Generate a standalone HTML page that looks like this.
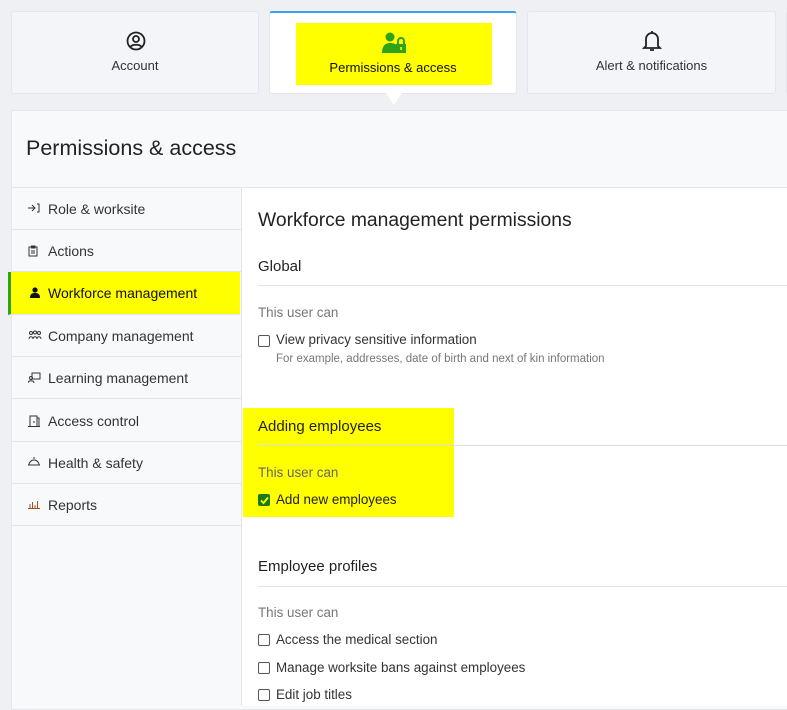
<!DOCTYPE html>
<html><head><meta charset="utf-8"><style>
*{margin:0;padding:0;box-sizing:border-box}
body{width:787px;height:706px;overflow:hidden;background:#eef0f4;font-family:"Liberation Sans",sans-serif;color:#222;position:relative}
.a{position:absolute}
.tab{position:absolute;top:11px;height:83px;background:#f4f5f9;border:1px solid #e4e6ec;border-radius:3px;text-align:center;font-size:13px;color:#333}
.tab .lbl{position:absolute;left:0;right:0;top:46px}
.side{position:absolute;left:11px;width:230px;height:42px;border-bottom:1px solid #e3e5ea;font-size:14px;color:#333}
.side span.t{position:absolute;left:37px;top:13px}
.side svg{position:absolute;left:17px;top:15px}
.h{position:absolute;left:258px;font-size:15px;color:#222}
.ln{position:absolute;left:258px;right:0;height:1px;background:#e3e5ea;z-index:2}
.muted{position:absolute;left:258px;font-size:13.4px;color:#777}
.cb{position:absolute;left:258px;width:12px;height:12px;border:1px solid #555;border-radius:2px;background:#fff}
.ct{position:absolute;left:276px;font-size:13.4px;color:#333}
</style></head><body>
<div class="tab" style="left:11px;width:248px">
<svg class="a" style="left:114px;top:19px" width="20" height="20" viewBox="0 0 20 20" fill="none" stroke="#222" stroke-width="1.8"><circle cx="10" cy="10" r="8.5"/><circle cx="10" cy="8" r="3"/><path d="M4.5 16c1.5-3 9.5-3 11 0"/></svg>
<div class="lbl">Account</div></div>
<div class="tab" style="left:269px;width:248px;background:#fff;border-top:2px solid #3aa0f0">
<div class="a" style="left:26px;top:10px;width:196px;height:62px;background:#ffff00"></div>
<svg class="a" style="left:112px;top:19px" width="26" height="22" viewBox="0 0 26 22"><circle cx="8" cy="5" r="4.5" fill="#2ea318"/><path d="M0 21c0-8 4-10 8-10s6 1 7 3v7z" fill="#2ea318"/><rect x="14" y="12" width="10" height="9" fill="#2ea318"/><path d="M16 12V9a3 3 0 0 1 6 0v3" fill="none" stroke="#2ea318" stroke-width="2"/><rect x="18.3" y="15" width="1.6" height="3" fill="#ffff00"/></svg>
<div class="lbl" style="top:47px;color:#111">Permissions &amp; access</div></div>
<div class="tab" style="left:527px;width:249px">
<svg class="a" style="left:114px;top:18px" width="20" height="22" viewBox="0 0 20 22" fill="none" stroke="#222" stroke-width="1.8"><path d="M4 16V9a6 6 0 0 1 12 0v7l2 2H2z"/><path d="M10 1v2M8 20h4"/></svg>
<div class="lbl">Alert &amp; notifications</div></div>
<div class="tab" style="left:786px;width:30px"></div>
<div class="a" style="left:11px;top:110px;width:780px;height:600px;background:#f8f9fb;border:1px solid #e4e6ec"></div>
<div class="a" style="left:386px;top:93px;width:0;height:0;border-left:8px solid transparent;border-right:8px solid transparent;border-top:12px solid #fff"></div>
<div class="a" style="left:26px;top:136px;font-size:21.5px;color:#222">Permissions &amp; access</div>
<div class="a" style="left:11px;top:187px;width:776px;height:1px;background:#e3e5ea"></div>
<div class="a" style="left:241px;top:188px;width:546px;height:518px;background:#fff;border-left:1px solid #e3e5ea"></div>

<div class="side" style="top:188px"><svg width="12" height="10" viewBox="0 0 12 10" fill="none" stroke="#333"><path d="M0 5h7M4 2l3 3-3 3M9 1h2v8H9"/></svg><span class="t">Role &amp; worksite</span></div>
<div class="side" style="top:230px"><svg width="10" height="12" viewBox="0 0 10 12" fill="none" stroke="#333"><rect x="1" y="2" width="8" height="9"/><path d="M3 1h4v2H3M3 6h4M3 8h4"/></svg><span class="t">Actions</span></div>
<div class="side" style="top:272px;left:8px;width:232px;background:#ffff00;border-left:3px solid #2ea318;height:43px"><svg width="10" height="11" viewBox="0 0 10 11" style="left:19px"><circle cx="5" cy="3" r="2.6" fill="#111"/><path d="M0 11c0-4 2-5 5-5s5 1 5 5z" fill="#111"/></svg><span class="t" style="left:37px;color:#111">Workforce management</span></div>
<div class="side" style="top:315px"><svg width="14" height="10" viewBox="0 0 14 10" fill="none" stroke="#333"><circle cx="3" cy="3" r="1.5"/><circle cx="7" cy="2.5" r="1.5"/><circle cx="11" cy="3" r="1.5"/><path d="M1 9c0-3 4-3 4 0M5 9c0-3 4-3 4 0M9 9c0-3 4-3 4 0"/></svg><span class="t">Company management</span></div>
<div class="side" style="top:357px"><svg width="13" height="11" viewBox="0 0 13 11" fill="none" stroke="#333"><rect x="4" y="1" width="8" height="6"/><circle cx="3" cy="6" r="1.5"/><path d="M0 11c0-3 6-3 6 0"/></svg><span class="t">Learning management</span></div>
<div class="side" style="top:400px"><svg width="12" height="12" viewBox="0 0 12 12" fill="none" stroke="#333"><path d="M0 11.5h12M2 11V1h7v10M9 3h2v8M6 6v2"/></svg><span class="t">Access control</span></div>
<div class="side" style="top:442px"><svg width="12" height="9" viewBox="0 0 12 9" fill="none" stroke="#333"><path d="M0 8h12M1 8a5 5 0 0 1 10 0M6 2V0"/></svg><span class="t">Health &amp; safety</span></div>
<div class="side" style="top:484px"><svg width="12" height="10" viewBox="0 0 12 10" fill="none" stroke="#a0521d"><path d="M0 9.5h12M2 9V5M4.5 9V3M7 9V6M9.5 9V2"/></svg><span class="t">Reports</span></div>

<div class="a" style="left:258px;top:210px;font-size:19.3px;color:#222">Workforce management permissions</div>
<div class="h" style="top:258px">Global</div>
<div class="ln" style="top:285px"></div>
<div class="muted" style="top:305px">This user can</div>
<div class="cb" style="top:335px"></div><div class="ct" style="top:332px">View privacy sensitive information</div>
<div class="a" style="left:276px;top:353px;font-size:11.5px;color:#777">For example, addresses, date of birth and next of kin information</div>

<div class="a" style="left:243px;top:408px;width:211px;height:109px;background:#ffff00"></div>
<div class="h" style="top:418px">Adding employees</div>
<div class="ln" style="top:445px;background:#dedede"></div>
<div class="muted" style="top:465px;color:#666">This user can</div>
<div class="cb" style="top:494px;background:#1a7a14;border-color:#1a7a14"><svg class="a" style="left:1px;top:1px" width="9" height="9" viewBox="0 0 9 9" fill="none" stroke="#ffff00" stroke-width="1.8"><path d="M1 4.5l2.5 2.5L8 1.5"/></svg></div>
<div class="ct" style="top:492px;color:#222">Add new employees</div>

<div class="h" style="top:558px">Employee profiles</div>
<div class="ln" style="top:586px"></div>
<div class="muted" style="top:605px">This user can</div>
<div class="cb" style="top:634px"></div><div class="ct" style="top:632px">Access the medical section</div>
<div class="cb" style="top:662px"></div><div class="ct" style="top:660px">Manage worksite bans against employees</div>
<div class="cb" style="top:689px"></div><div class="ct" style="top:687px">Edit job titles</div>
</body></html>
